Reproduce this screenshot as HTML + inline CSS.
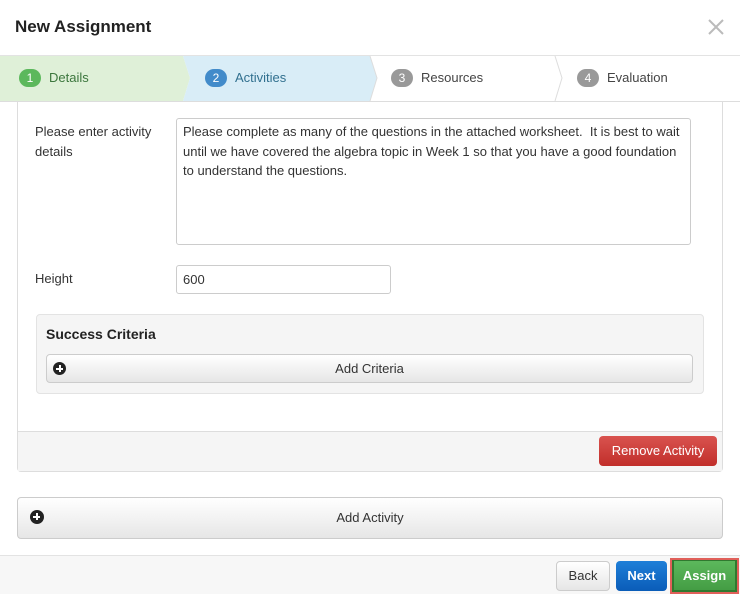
<!DOCTYPE html>
<html><head><style>
*{box-sizing:border-box;margin:0;padding:0}
body{width:740px;height:594px;background:#fff;font-family:"Liberation Sans",Arial,sans-serif;font-size:13px;color:#333;position:relative;overflow:hidden}
.a{position:absolute}
.btn{position:absolute;border:1px solid #ccc;border-radius:4px;background:linear-gradient(#fff,#e6e6e6);text-align:center;color:#333}
.num{display:inline-block;width:22px;height:18px;border-radius:9px;color:#fff;text-align:center;line-height:18px;font-size:12px;margin-right:8px}
.plus{position:absolute;width:13px;height:13px;border-radius:50%;background:#222}
.plus:before{content:"";position:absolute;left:3px;top:5.5px;width:7px;height:2px;background:#fff}
.plus:after{content:"";position:absolute;left:5.5px;top:3px;width:2px;height:7px;background:#fff}
</style></head><body>
<div class="a" style="left:15px;top:17px;font-size:17px;font-weight:bold;color:#222">New Assignment</div>
<svg class="a" style="left:708px;top:19px" width="16" height="16"><path d="M1 1L15 15M15 1L1 15" stroke="#bbb" stroke-width="2"/></svg>
<div class="a" style="left:0;top:55px;width:740px;height:1px;background:#e3e3e3"></div>
<svg class="a" style="left:0;top:56px" width="740" height="46">
<polygon points="0,0 183,0 190,22 183,45 0,45" fill="#dff0d8"/>
<polygon points="183,0 370,0 377,22 370,45 183,45 190,22" fill="#d9edf7"/>
<polyline points="370,0 377,22 370,45" fill="none" stroke="#ddd"/>
<polyline points="555,0 562,22 555,45" fill="none" stroke="#ddd"/>
<line x1="0" y1="45.5" x2="740" y2="45.5" stroke="#ddd"/>
</svg>
<div class="a" style="left:19px;top:69px;color:#3c763d"><span class="num" style="background:#5cb85c">1</span>Details</div>
<div class="a" style="left:205px;top:69px;color:#31708f"><span class="num" style="background:#428bca">2</span>Activities</div>
<div class="a" style="left:391px;top:69px;color:#444"><span class="num" style="background:#999">3</span>Resources</div>
<div class="a" style="left:577px;top:69px;color:#444"><span class="num" style="background:#999">4</span>Evaluation</div>
<div class="a" style="left:17px;top:101px;width:706px;height:371px;border:1px solid #ddd;border-top:none;border-radius:0 0 4px 4px"></div>
<div class="a" style="left:18px;top:431px;width:704px;height:40px;background:#f5f5f5;border-top:1px solid #ddd"></div>
<div class="a" style="left:35px;top:122px;line-height:20px;width:130px">Please enter activity details</div>
<div class="a" style="left:176px;top:118px;width:515px;height:127px;border:1px solid #ccc;border-radius:3px;padding:3px 6px;line-height:19.5px">Please complete as many of the questions in the attached worksheet.&nbsp; It is best to wait until we have covered the algebra topic in Week 1 so that you have a good foundation to understand the questions.</div>
<div class="a" style="left:35px;top:271px">Height</div>
<div class="a" style="left:176px;top:265px;width:215px;height:29px;border:1px solid #ccc;border-radius:3px;padding:6px 6px">600</div>
<div class="a" style="left:36px;top:314px;width:668px;height:80px;border:1px solid #e3e3e3;border-radius:4px;background:#f5f5f5"></div>
<div class="a" style="left:46px;top:326px;font-weight:bold;font-size:14px;color:#222">Success Criteria</div>
<div class="btn" style="left:46px;top:354px;width:647px;height:29px;line-height:27px">Add Criteria</div>
<div class="plus" style="left:53px;top:362px"></div>
<div class="a" style="left:599px;top:436px;width:118px;height:30px;border-radius:4px;background:linear-gradient(#d9534f,#c12e2a);color:#fff;text-align:center;line-height:30px">Remove Activity</div>
<div class="btn" style="left:17px;top:497px;width:706px;height:42px;line-height:40px">Add Activity</div>
<div class="plus" style="left:30px;top:510px;width:14px;height:14px"></div>
<div class="a" style="left:0;top:555px;width:740px;height:39px;background:#f7f7f7;border-top:1px solid #e3e3e3"></div>
<div class="btn" style="left:556px;top:561px;width:54px;height:30px;line-height:28px">Back</div>
<div class="a" style="left:616px;top:561px;width:51px;height:30px;border-radius:4px;background:linear-gradient(#1e7fd8,#0a5cb8);color:#fff;text-align:center;line-height:30px;font-weight:bold">Next</div>
<div class="a" style="left:670px;top:558px;width:69px;height:36px;border:2px solid #e0605a;background:#2f7a2f"></div>
<div class="a" style="left:674px;top:561px;width:61px;height:29px;background:linear-gradient(#5cb85c,#449d44);color:#fff;text-align:center;line-height:29px;font-weight:bold">Assign</div>
</body></html>
